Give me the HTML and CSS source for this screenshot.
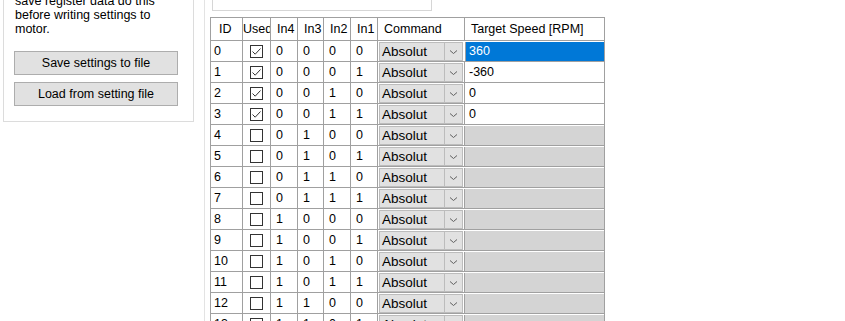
FILE: index.html
```html
<!DOCTYPE html>
<html>
<head>
<meta charset="utf-8">
<link rel="stylesheet" href="styles.css">
</head>
<body>
<div class="app">
  <div class="left">
    <div class="group">
      <p class="note">save register data do this<br>before writing settings to<br>motor.</p>
      <button class="btn">Save settings to file</button>
      <button class="btn">Load from setting file</button>
    </div>
  </div>
  <div class="right">
    <div class="textbox"></div>
    <div class="grid" id="grid">
      <div class="row head">
        <div class="c id">ID</div>
        <div class="c used">Used</div>
        <div class="c in">In4</div>
        <div class="c in">In3</div>
        <div class="c in">In2</div>
        <div class="c in">In1</div>
        <div class="c cmd">Command</div>
        <div class="c spd">Target Speed [RPM]</div>
      </div>
    </div>
  </div>
</div>
<script src="app.js"></script>
</body>
</html>
```
FILE: styles.css
```css
html, body {
  margin: 0;
  padding: 0;
  background: #ffffff;
  overflow: hidden;
}
body {
  font-family: "Liberation Sans", Arial, sans-serif;
  font-size: 12.5px;
  color: #000;
  width: 845px;
  height: 321px;
}
.app {
  display: flex;
  height: 321px;
}
.left {
  width: 204px;
  flex: none;
}
.group {
  margin-left: 3px;
  margin-top: -30px;
  width: 191px;
  height: 152px;
  border: 1px solid #dcdcdc;
  border-top: none;
  box-sizing: border-box;
  padding: 0 15px 0 10px;
  display: flex;
  flex-direction: column;
}
.note {
  margin: 24px 0 0 1px;
  line-height: 14px;
  white-space: nowrap;
}
.btn {
  font-family: inherit;
  font-size: 12.5px;
  color: #000;
  width: 164px;
  height: 24px;
  background: #e1e1e1;
  border: 1px solid #adadad;
  padding: 0;
  margin: 0;
}
.note + .btn { margin-top: 15px; }
.btn + .btn { margin-top: 7px; }

.right {
  flex: 1;
  border-left: 1px solid #e3e3e3;
  padding-left: 5px;
}
.textbox {
  margin-left: 2px;
  margin-top: -9px;
  width: 220px;
  height: 20px;
  border: 1px solid #d6d6d6;
  box-sizing: border-box;
}
.grid {
  margin-top: 6px;
  width: 395px;
  border-top: 1px solid #a0a0a0;
}
.row {
  display: grid;
  grid-template-columns: 32px 28px 27px 26px 27px 27px 87px 140px;
  height: 21px;
  box-sizing: border-box;
  border-bottom: 1px solid #a0a0a0;
  border-right: 1px solid #a0a0a0;
}
.row.head {
  height: 23px;
}
.c {
  border-left: 1px solid #a0a0a0;
  overflow: hidden;
  white-space: nowrap;
  line-height: 20px;
  padding-left: 3px;
}
.head .c { line-height: 22px; padding-left: 6px; }
.head .id { padding-left: 8px; }
.head .used { padding-left: 0; }
.c.chk {
  display: flex;
  align-items: center;
  justify-content: center;
  padding: 0;
}
.box {
  width: 13px;
  height: 13px;
  box-sizing: border-box;
  border: 1px solid #333;
  background: #fff;
  display: flex;
  align-items: center;
  justify-content: center;
}
.c.num { padding-left: 5px; }
.c.combo { padding: 1px 1px 0 1px; }
.cb {
  display: flex;
  background: #e1e1e1;
  border: 1px solid #bcbcbc;
  box-sizing: border-box;
  height: 19px;
}
.cb .t {
  flex: 1;
  padding-left: 2px;
  line-height: 18px;
  font-size: 13.5px;
}
.cb .arr {
  width: 17px;
  border-left: 1px solid #bcbcbc;
  display: flex;
  align-items: center;
  justify-content: center;
}
.c.val { padding-left: 4px; }
.c.val.sel {
  background: #0078d7;
  color: #fff;
  margin: 1px 0 0 1px;
  line-height: 19px;
  padding-left: 3px;
}
.c.val.dis {
  background: #d4d4d4;
  margin-top: 1px;
}
```
FILE: app.js
```javascript
(function () {
  var grid = document.getElementById('grid');
  var speeds = ['360', '-360', '0', '0'];
  var check = '<svg width="11" height="11" viewBox="0 0 11 11"><path d="M1.5 5.5 L4.2 8.2 L9.5 2.5" fill="none" stroke="#333" stroke-width="1"/></svg>';
  var arrow = '<svg width="9" height="6" viewBox="0 0 9 6"><path d="M1 1.5 L4.5 4.5 L8 1.5" fill="none" stroke="#606060" stroke-width="1"/></svg>';
  for (var i = 0; i < 14; i++) {
    var bits = [(i >> 3) & 1, (i >> 2) & 1, (i >> 1) & 1, i & 1];
    var used = i < 4;
    var html = '<div class="c id">' + i + '</div>';
    html += '<div class="c chk"><span class="box">' + (used ? check : '') + '</span></div>';
    for (var b = 0; b < 4; b++) html += '<div class="c num">' + bits[b] + '</div>';
    html += '<div class="c combo"><div class="cb"><span class="t">Absolut</span><span class="arr">' + arrow + '</span></div></div>';
    var cls = 'c val';
    if (i === 0) cls += ' sel';
    else if (!used) cls += ' dis';
    html += '<div class="' + cls + '">' + (used ? speeds[i] : '') + '</div>';
    var row = document.createElement('div');
    row.className = 'row';
    row.innerHTML = html;
    grid.appendChild(row);
  }
})();
```
